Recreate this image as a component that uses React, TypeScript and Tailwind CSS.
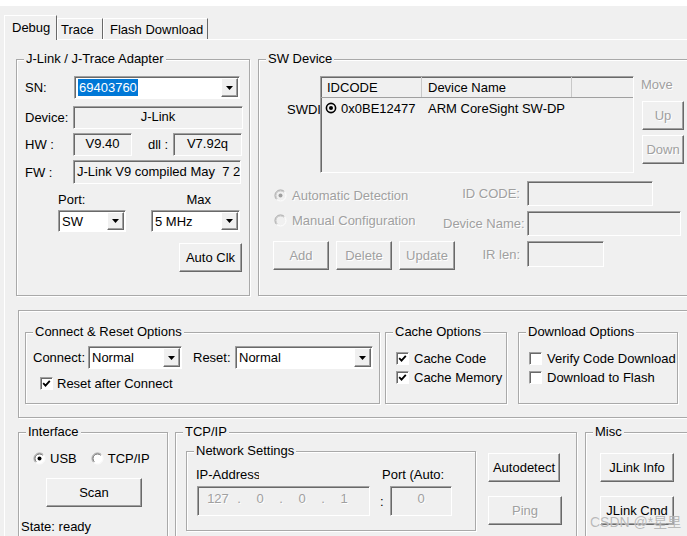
import type { ReactNode } from "react";

const sunken = "border border-t-[#a0a0a0] border-l-[#a0a0a0] border-r-white border-b-white shadow-[inset_1px_1px_0_#696969]";
const raised = "border border-t-white border-l-white border-r-[#696969] border-b-[#696969] bg-[#f0f0f0] shadow-[inset_-1px_-1px_0_#a0a0a0]";
const grayed = "text-[#a0a0a0] [text-shadow:1px_1px_0_#fff]";

function Group({ label, className, children }: { label?: string; className: string; children?: ReactNode }) {
  return (
    <div className={`relative shrink-0 border border-[#a9a9a9] shadow-[inset_1px_1px_0_#fff,1px_1px_0_#fff] ${className}`}>
      {label ? <span className="absolute -top-[9px] left-[7px] bg-[#f0f0f0] px-[2px] leading-[16px]">{label}</span> : null}
      {children}
    </div>
  );
}

function Arrow() {
  return (
    <svg width="7" height="4" viewBox="0 0 7 4">
      <path d="M0 0h7L3.5 4z" fill="#000" />
    </svg>
  );
}

function Combo({ value, className, selected }: { value: string; className: string; selected?: boolean }) {
  return (
    <div className={`${sunken} flex shrink-0 items-stretch bg-white p-[1px] ${className}`}>
      <span className="flex flex-1 items-center overflow-hidden whitespace-nowrap pl-[2px]">
        {selected ? <span className="bg-[#0078d7] px-px leading-[17px] text-white">{value}</span> : value}
      </span>
      <div className={`${raised} flex w-[17px] items-center justify-center`}>
        <Arrow />
      </div>
    </div>
  );
}

function Field({ className, children }: { className: string; children?: ReactNode }) {
  return <div className={`${sunken} flex shrink-0 items-center overflow-hidden whitespace-nowrap ${className}`}>{children}</div>;
}

function Btn({ children, className, disabled }: { children: ReactNode; className: string; disabled?: boolean }) {
  return <div className={`${raised} flex shrink-0 items-center justify-center ${disabled ? grayed : ""} ${className}`}>{children}</div>;
}

function Check({ checked }: { checked?: boolean }) {
  return (
    <span className={`${sunken} flex h-[13px] w-[13px] shrink-0 items-center justify-center bg-white`}>
      {checked ? (
        <svg width="9" height="9" viewBox="0 0 9 9">
          <path d="M1.2 4.2l2.3 2.4L7.8 1.8" fill="none" stroke="#000" strokeWidth="1.8" />
        </svg>
      ) : null}
    </span>
  );
}

function Radio({ on, disabled }: { on?: boolean; disabled?: boolean }) {
  return (
    <svg width="13" height="13" viewBox="0 0 13 13" className="shrink-0">
      <circle cx="6.5" cy="6.5" r="5" fill={disabled ? "#f0f0f0" : "#fff"} />
      <path d="M2.6 10.4A5.5 5.5 0 0 1 10.4 2.6" fill="none" stroke="#a0a0a0" />
      <path d="M10.4 2.6A5.5 5.5 0 0 1 2.6 10.4" fill="none" stroke="#fff" />
      <path d="M3.3 9.7A4.5 4.5 0 0 1 9.7 3.3" fill="none" stroke={disabled ? "#c8c8c8" : "#696969"} />
      {on ? <circle cx="6.5" cy="6.5" r="2" fill={disabled ? "#a0a0a0" : "#000"} /> : null}
    </svg>
  );
}

function Tabs() {
  return (
    <div className="mt-[9px] flex h-[24px] items-end pl-[4px]">
      <div className="relative z-10 -mb-px h-[25px] w-[53px] border-l border-r border-t border-l-white border-r-[#696969] border-t-white bg-[#f0f0f0] pl-[7px] pt-[4px]">Debug</div>
      <div className="h-[21px] w-[46px] border-l border-r border-t border-l-white border-r-[#696969] border-t-white pl-[3px] pt-[3px]">Trace</div>
      <div className="h-[21px] w-[105px] border-l border-r border-t border-l-white border-r-[#696969] border-t-white pl-[6px] pt-[3px]">Flash Download</div>
    </div>
  );
}

function JLinkGroup() {
  return (
    <Group label="J-Link / J-Trace Adapter" className="h-[237px] w-[234px]">
      <div className="flex flex-col pt-[16px]">
        <div className="flex h-[23px] items-center">
          <span className="w-[57px] pl-[8px]">SN:</span>
          <Combo value="69403760" selected className="h-[23px] w-[166px]" />
        </div>
        <div className="mt-[7px] flex h-[23px] items-center">
          <span className="w-[56px] pl-[8px]">Device:</span>
          <Field className="h-[23px] w-[170px] justify-center pb-[2px]">J-Link</Field>
        </div>
        <div className="mt-[4px] flex h-[23px] items-center">
          <span className="w-[56px] pl-[8px]">HW :</span>
          <Field className="h-[23px] w-[59px] justify-center pb-[2px]">V9.40</Field>
          <span className="ml-[16px] w-[25px]">dll :</span>
          <Field className="h-[23px] w-[69px] justify-center pb-[2px]">V7.92q</Field>
        </div>
        <div className="mt-[4px] flex h-[24px] items-center">
          <span className="w-[56px] pl-[8px]">FW :</span>
          <Field className="h-[24px] w-[168px] pl-[3px] pb-[2px]">J-Link V9 compiled May&nbsp;&nbsp;7 2021</Field>
        </div>
        <div className="mt-[8px] flex h-[15px]">
          <span className="ml-[41px]">Port:</span>
          <span className="ml-[101px]">Max</span>
        </div>
        <div className="mt-[3px] flex">
          <Combo value="SW" className="ml-[41px] h-[22px] w-[68px]" />
          <Combo value="5 MHz" className="ml-[25px] h-[22px] w-[89px]" />
        </div>
        <Btn className="ml-[162px] mt-[11px] h-[29px] w-[63px]">Auto Clk</Btn>
      </div>
    </Group>
  );
}

function Target() {
  return (
    <svg width="12" height="12" viewBox="0 0 12 12" className="shrink-0">
      <circle cx="6" cy="6" r="4.6" fill="none" stroke="#000" strokeWidth="1.6" />
      <circle cx="6" cy="6" r="2" fill="#000" />
    </svg>
  );
}

function SwDeviceGroup() {
  return (
    <Group label="SW Device" className="h-[237px] w-[450px]">
      <div className="flex pt-[16px]">
        <div className="w-[61px] shrink-0 overflow-hidden whitespace-nowrap pl-[28px] pt-[26px]">SWDIO</div>
        <div className={`${sunken} h-[97px] w-[314px] shrink-0`}>
          <div className="flex h-[21px] border-b border-[#a0a0a0]">
            <div className="w-[101px] border-r border-[#c8c8c8] pl-[6px] pt-[3px]">IDCODE</div>
            <div className="w-[150px] border-r border-[#c8c8c8] pl-[6px] pt-[3px]">Device Name</div>
          </div>
          <div className="flex h-[20px] items-center">
            <div className="flex w-[101px] items-center gap-[4px] pl-[4px]">
              <Target />
              <span>0x0BE12477</span>
            </div>
            <span className="pl-[6px]">ARM CoreSight SW-DP</span>
          </div>
        </div>
        <div className="ml-[7px] flex flex-col">
          <span className={`${grayed} pt-[1px]`}>Move</span>
          <Btn disabled className="ml-px mt-[9px] h-[29px] w-[42px]">Up</Btn>
          <Btn disabled className="ml-px mt-[5px] h-[29px] w-[42px]">Down</Btn>
        </div>
      </div>
      <div className="mt-[8px] flex">
        <div className="ml-[14px] flex w-[170px] shrink-0 flex-col">
          <div className={`mt-[7px] flex h-[14px] items-center gap-[5px] whitespace-nowrap pl-px ${grayed}`}>
            <Radio on disabled />
            <span>Automatic Detection</span>
          </div>
          <div className={`mt-[11px] flex h-[14px] items-center gap-[5px] whitespace-nowrap pl-px ${grayed}`}>
            <Radio disabled />
            <span>Manual Configuration</span>
          </div>
          <div className="mt-[14px] flex gap-[7px]">
            <Btn disabled className="h-[29px] w-[56px]">Add</Btn>
            <Btn disabled className="h-[29px] w-[56px]">Delete</Btn>
            <Btn disabled className="h-[29px] w-[56px]">Update</Btn>
          </div>
        </div>
        <div className="flex flex-col gap-[5px]">
          <div className="flex items-center">
            <span className={`w-[84px] whitespace-nowrap pr-[7px] text-right ${grayed}`}>ID CODE:</span>
            <Field className="h-[25px] w-[126px]" />
          </div>
          <div className="flex items-center">
            <span className={`w-[84px] whitespace-nowrap pr-[7px] text-right ${grayed}`}>Device Name:</span>
            <Field className="h-[25px] w-[154px]" />
          </div>
          <div className="flex items-center">
            <span className={`w-[84px] whitespace-nowrap pr-[7px] text-right ${grayed}`}>IR len:</span>
            <Field className="h-[26px] w-[77px]" />
          </div>
        </div>
      </div>
    </Group>
  );
}

function OptionsGroup() {
  return (
    <Group className="ml-[13px] mt-[14px] h-[108px] w-[700px]">
      <div className="ml-[6px] mt-[21px] flex">
        <Group label="Connect & Reset Options" className="h-[72px] w-[355px]">
          <div className="mt-[13px] flex h-[23px] items-center">
            <span className="w-[62px] pl-[7px]">Connect:</span>
            <Combo value="Normal" className="h-[23px] w-[94px]" />
            <span className="ml-[11px] w-[42px]">Reset:</span>
            <Combo value="Normal" className="h-[23px] w-[138px]" />
          </div>
          <div className="mt-[7px] flex items-center gap-[4px] pl-[14px]">
            <Check checked />
            <span>Reset after Connect</span>
          </div>
        </Group>
        <Group label="Cache Options" className="ml-[5px] h-[72px] w-[122px]">
          <div className="flex flex-col gap-[4px] overflow-hidden pl-[10px] pt-[18px]">
            <div className="flex items-center gap-[5px] whitespace-nowrap">
              <Check checked />
              <span>Cache Code</span>
            </div>
            <div className="flex items-center gap-[5px] whitespace-nowrap">
              <Check checked />
              <span>Cache Memory</span>
            </div>
          </div>
        </Group>
        <Group label="Download Options" className="ml-[11px] h-[72px] w-[160px]">
          <div className="flex h-full flex-col gap-[4px] overflow-hidden pl-[10px] pt-[18px]">
            <div className="flex items-center gap-[5px] whitespace-nowrap">
              <Check />
              <span>Verify Code Download</span>
            </div>
            <div className="flex items-center gap-[5px] whitespace-nowrap">
              <Check />
              <span>Download to Flash</span>
            </div>
          </div>
        </Group>
      </div>
    </Group>
  );
}

function BottomRow() {
  const octet = "w-[30px] text-center";
  const dot = "w-[12px] text-center";
  return (
    <div className="ml-[13px] mt-[14px] flex">
      <Group label="Interface" className="h-[120px] w-[150px]">
        <div className="mt-[18px] flex h-[14px] items-center pl-[14px]">
          <Radio on />
          <span className="ml-[4px]">USB</span>
          <span className="ml-[14px]"><Radio /></span>
          <span className="ml-[4px]">TCP/IP</span>
        </div>
        <Btn className="ml-[27px] mt-[13px] h-[29px] w-[96px]">Scan</Btn>
        <div className="mt-[12px] pl-[2px]">State: ready</div>
      </Group>
      <Group label="TCP/IP" className="ml-[7px] h-[120px] w-[402px]">
        <div className="flex">
          <Group label="Network Settings" className="ml-[10px] mt-[18px] h-[80px] w-[290px]">
            <div className="mt-[15px] flex h-[15px]">
              <span className="ml-[9px] w-[63px] overflow-hidden whitespace-nowrap">IP-Address</span>
              <span className="ml-[123px]">Port (Auto:</span>
            </div>
            <div className="mt-[4px] flex items-center">
              <Field className={`ml-[10px] h-[30px] w-[173px] items-start pl-[5px] pt-[4px] ${grayed}`}>
                <span className={octet}>127</span>
                <span className={dot}>.</span>
                <span className={octet}>0</span>
                <span className={dot}>.</span>
                <span className={octet}>0</span>
                <span className={dot}>.</span>
                <span className={octet}>1</span>
              </Field>
              <span className="ml-[10px] w-[10px]">:</span>
              <Field className={`h-[30px] w-[62px] items-start justify-center pt-[4px] ${grayed}`}>0</Field>
            </div>
          </Group>
          <div className="ml-[12px] flex flex-col">
            <Btn className="mt-[20px] h-[29px] w-[72px]">Autodetect</Btn>
            <Btn disabled className="mt-[14px] h-[29px] w-[74px]">Ping</Btn>
          </div>
        </div>
      </Group>
      <Group label="Misc" className="ml-[8px] h-[120px] w-[150px]">
        <Btn className="ml-[14px] mt-[20px] h-[29px] w-[74px]">JLink Info</Btn>
        <Btn className="ml-[14px] mt-[14px] h-[29px] w-[74px]">JLink Cmd</Btn>
      </Group>
    </div>
  );
}

export default function App() {
  return (
    <div className="relative h-[536px] w-[687px] overflow-hidden bg-[#f0f0f0] font-['Liberation_Sans','Noto_Sans_CJK_SC',Arial,sans-serif] text-[13px] leading-[15px] text-black">
      <div className="h-[6px] bg-white" />
      <Tabs />
      <div className="ml-[4px] h-[497px] border-l border-t border-white">
        <div className="ml-[11px] mt-[19px] flex gap-[8px]">
          <JLinkGroup />
          <SwDeviceGroup />
        </div>
        <OptionsGroup />
        <BottomRow />
      </div>
      <div className="pointer-events-none absolute left-[590px] top-[513px] whitespace-nowrap text-[14px] leading-[18px] text-[#b4b4b4] opacity-90 [text-shadow:0_0_1px_#fff]">
        CSDN @*星里
      </div>
    </div>
  );
}
